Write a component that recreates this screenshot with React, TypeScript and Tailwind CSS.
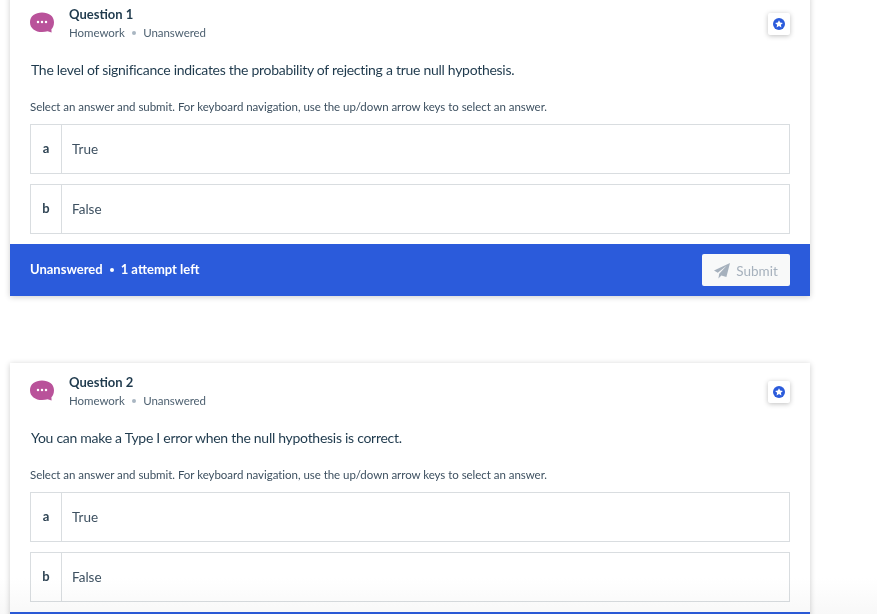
const questions = [
  { id: 1, text: 'The level of significance indicates the probability of rejecting a true null hypothesis.' },
  { id: 2, text: 'You can make a Type I error when the null hypothesis is correct.' },
];

const ChatIcon = () => (
  <svg width="24" height="22" viewBox="0 0 24 22" className="block">
    <path
      d="M12 0.5C18.6 0.5 24 3.9 24 10.2C24 14 22.6 16.2 21.4 17.2L21.6 20.6L17.6 19.2C16 19.7 14 20 12 20C5.4 20 0 16.5 0 10.2C0 3.9 5.4 0.5 12 0.5Z"
      fill="#b9529a"
    />
    <circle cx="8" cy="10" r="1.25" fill="#fff" />
    <circle cx="12" cy="10" r="1.25" fill="#fff" />
    <circle cx="16" cy="10" r="1.25" fill="#fff" />
  </svg>
);

const StarBadge = () => (
  <button className="flex h-[22px] w-[22px] items-center justify-center rounded-[2px] bg-white shadow-[0_1px_5px_rgba(0,0,0,0.25)]">
    <svg width="12" height="12" viewBox="0 0 12 12">
      <circle cx="6" cy="6" r="6" fill="#2b5bdb" />
      <path d="M6 2.2L7.2 4.6L9.9 5L7.9 6.8L8.4 9.4L6 8.1L3.6 9.4L4.1 6.8L2.1 5L4.8 4.6Z" fill="#fff" />
    </svg>
  </button>
);

const PlaneIcon = () => (
  <svg width="16" height="16" viewBox="0 0 16 16" className="block">
    <path d="M16 0L0 7.4L3.8 9.8L12.6 2.8L5.2 10.8L4.4 15.6L7.4 12.4L12.4 14Z" fill="#a6b1bd" />
  </svg>
);

const Option = ({ letter, label }: { letter: string; label: string }) => (
  <div className="flex h-[50px] border border-[#d9dde0] bg-white">
    <div className="flex w-[31px] items-center justify-center border-r border-[#d9dde0] text-[13px] font-bold text-[#2f4454]">
      {letter}
    </div>
    <div className="flex items-center pl-[10px] text-[13.5px] text-[#3d5060]">{label}</div>
  </div>
);

const QuestionCard = ({ id, text }: { id: number; text: string }) => (
  <section className="w-[800px] bg-white shadow-[0_1px_6px_rgba(0,0,0,0.2)]">
    <div className="px-5 pt-[10px]">
      <div className="flex items-start justify-between">
        <div className="flex">
          <div className="mt-[7px] w-[39px]">
            <ChatIcon />
          </div>
          <div>
            <h2 className="text-[13px] leading-[18px] font-bold text-[#1f3a4d]">Question {id}</h2>
            <div className="mt-[1px] flex items-center text-[11.5px] leading-[18px] tracking-[-0.05px] text-[#4d6070]">
              Homework
              <span className="mx-[7px] h-[4.5px] w-[4.5px] rounded-full bg-[#a9b6c2]" />
              Unanswered
            </div>
          </div>
        </div>
        <div className="mt-[8px]">
          <StarBadge />
        </div>
      </div>
      <p className="mt-[17px] pl-[1px] text-[14px] leading-[22px] tracking-[-0.28px] text-[#1f3a4d]">{text}</p>
      <p className="mt-[18px] text-[11.5px] leading-[16px] tracking-[-0.04px] text-[#3d5060]">
        Select an answer and submit. For keyboard navigation, use the up/down arrow keys to select an answer.
      </p>
      <div className="mt-[9px] flex flex-col gap-[10px]">
        <Option letter="a" label="True" />
        <Option letter="b" label="False" />
      </div>
    </div>
    <div className="mt-[10px] flex h-[52px] items-center justify-between bg-[#2b5bdb] px-5">
      <div className="flex items-center text-[13px] font-bold text-white">
        Unanswered
        <span className="mx-[7px] h-[4px] w-[4px] rounded-full bg-white" />
        1 attempt left
      </div>
      <button className="flex h-[32px] w-[88px] items-center justify-center gap-[6px] rounded-[2px] bg-[#f8f9f9] pt-[2px] text-[13.5px] text-[#a6b1bd]">
        <PlaneIcon />
        Submit
      </button>
    </div>
  </section>
);

export default function App() {
  return (
    <div className="relative h-[614px] overflow-hidden bg-white font-['Lato',sans-serif]">
      <div className="-mt-[5px] ml-[10px] flex flex-col gap-[67px]">
        {questions.map((q) => (
          <QuestionCard key={q.id} id={q.id} text={q.text} />
        ))}
      </div>
      {/* fade at the bottom edge of the page */}
      <div className="pointer-events-none absolute right-0 bottom-0 left-0 h-[36px] bg-gradient-to-b from-white to-[#f8f8f8] mix-blend-multiply" />
    </div>
  );
}
